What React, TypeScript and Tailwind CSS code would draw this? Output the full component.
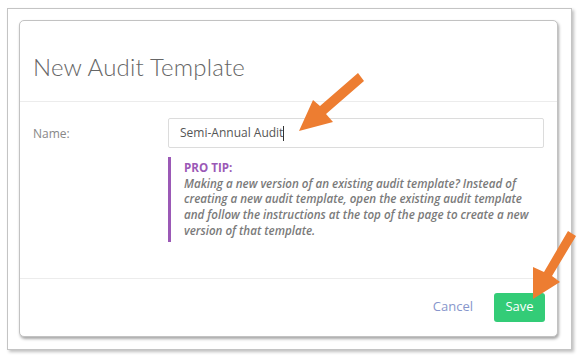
import React from "react";

export default function App() {
  return (
    <div className="relative w-[583px] h-[363px] bg-white overflow-hidden" style={{ fontFamily: '"Open Sans", sans-serif' }}>
      <div className="pt-[8px] pl-[7px]">
        <div className="w-[565px] h-[342px] border border-[#c4c4c4] bg-white shadow-[2px_2px_3px_rgba(0,0,0,0.25)] pt-[11px] pl-[11px]">
          <div className="w-[539px] h-[317px] border border-[#c2c2c2] rounded-[5px] bg-white shadow-[1px_2px_3px_rgba(0,0,0,0.35)] flex flex-col">
            <div className="h-[81px] border-b border-[#ececec] flex items-center pl-[13px] pt-[12px]">
              <h1 className="text-[24px] font-light text-[#666] tracking-[0.2px]" style={{ fontFamily: 'Lato, sans-serif' }}>
                New Audit Template
              </h1>
            </div>
            <div className="h-[177px] border-b border-[#ececec] pt-[16px] pl-[13px] pr-[13px] flex">
              <div className="w-[135px] pt-[7px] text-[12px] text-[#888]">Name:</div>
              <div className="flex flex-col w-[376px]">
                <div className="h-[30px] border border-[#dcdcdc] rounded-[2px] flex items-center pl-[11px] text-[12px] text-[#555]">
                  <span>Semi-Annual Audit</span>
                  <span className="inline-block w-[1px] h-[15px] bg-[#333]" />
                </div>
                <div className="mt-[9px] border-l-[3px] border-[#9b59b6] pl-[13px] pr-[2px] py-[3px] text-[11.6px] leading-[15.7px]">
                  <div className="font-bold text-[#9b59b6]">PRO TIP:</div>
                  <div className="font-semibold italic text-[#7a7a7a]">
                    Making a new version of an existing audit template? Instead of creating a new audit template, open the existing audit template and follow the instructions at the top of the page to create a new version of that template.
                  </div>
                </div>
              </div>
            </div>
            <div className="flex-1 flex items-center justify-end pr-[12px] pb-[1px]">
              <span className="text-[13px] text-[#8796cc] mr-[21px]">Cancel</span>
              <button className="w-[51px] h-[29px] rounded-[3px] bg-[#33cc77] text-white text-[13px]">Save</button>
            </div>
          </div>
        </div>
      </div>
      <svg className="absolute left-0 top-0" width="583" height="363" viewBox="0 0 583 363">
        <polygon points="358,73 364,81 326,114 333,122 299,131 313,100 320,106" fill="#ed7d31" />
        <polygon points="568,231 576,236 552,276 560,282 533,299 533,267 544,272" fill="#ed7d31" />
      </svg>
    </div>
  );
}
